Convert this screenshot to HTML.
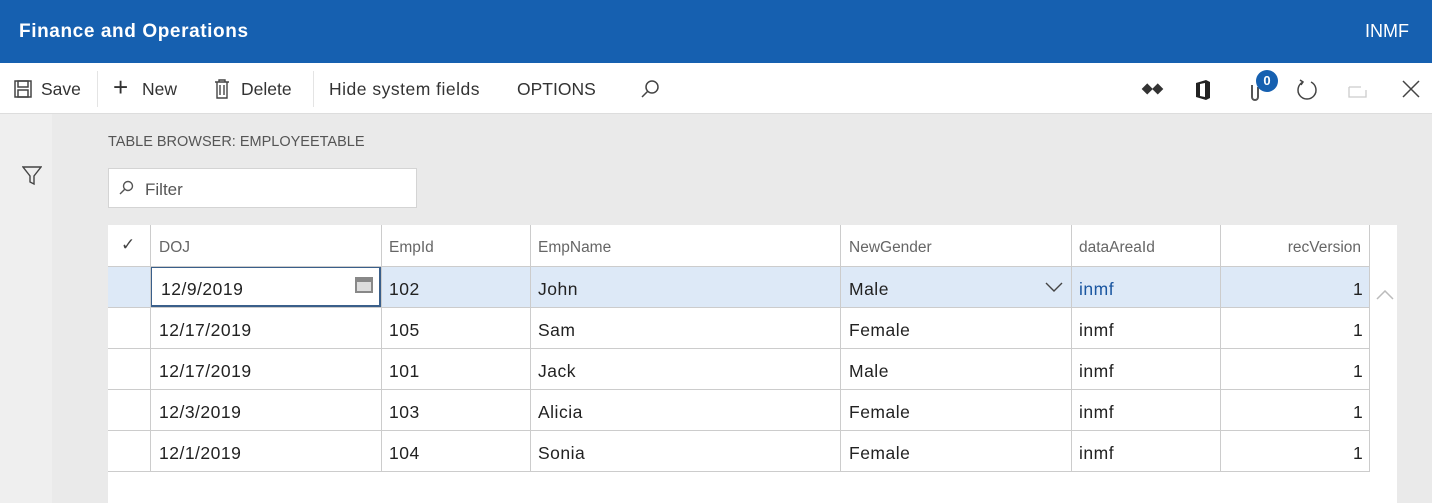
<!DOCTYPE html>
<html><head><style>
*{margin:0;padding:0;box-sizing:border-box}
body{width:1432px;height:503px;overflow:hidden;background:#eaeaea;font-family:"Liberation Sans",sans-serif;position:relative;color:#222}
.hdr{position:absolute;left:0;top:0;width:1432px;height:63px;background:#1660b0;color:#fff;font-weight:bold;font-size:19px}
.hdr span{position:absolute;top:21px}
.tb{position:absolute;left:0;top:63px;width:1432px;height:51px;background:#fff;border-bottom:1px solid #ddd;font-size:17.5px;color:#333}
.tb span{position:absolute;top:16px}
.sep{position:absolute;top:8px;width:1px;height:36px;background:#e4e4e4}
.left{position:absolute;left:0;top:114px;width:52px;height:389px;background:#efefef}
.grid{position:absolute;left:108px;top:225px;width:1289px;height:278px;background:#fff}
.c{position:absolute;font-size:17.5px;letter-spacing:0.5px}
.h{position:absolute;font-size:15.5px;color:#666;top:14px}
.vl{position:absolute;width:1px;background:#ccc;top:0;height:246px}
.hl{position:absolute;left:0;width:1262px;height:1px;background:#ccc}
</style></head><body>
<div class="hdr"><span style="left:19px;letter-spacing:0.6px">Finance and Operations</span><span style="left:1365px;font-weight:normal;font-size:18px">INMF</span></div>
<div class="tb">
<svg style="position:absolute;left:14px;top:17px" width="18" height="18" viewBox="0 0 18 18" fill="none" stroke="#444" stroke-width="1.5"><rect x="1" y="1" width="16" height="16"/><rect x="4" y="1" width="10" height="6"/><rect x="4" y="10" width="10" height="7"/></svg>
<span style="left:41px">Save</span><div class="sep" style="left:97px"></div>
<span style="left:113px;font-size:26px;top:9px;font-weight:300">+</span><span style="left:142px">New</span>
<svg style="position:absolute;left:214px;top:16px" width="16" height="20" viewBox="0 0 16 20" fill="none" stroke="#444" stroke-width="1.4"><path d="M1 3h14M5 3V1h6v2M3 3v16h10V3M6 6v10M10 6v10"/></svg>
<span style="left:241px">Delete</span><div class="sep" style="left:313px"></div>
<span style="left:329px;letter-spacing:0.5px">Hide system fields</span><span style="left:517px">OPTIONS</span>
<svg style="position:absolute;left:640px;top:16px" width="20" height="20" viewBox="0 0 20 20" fill="none" stroke="#444" stroke-width="1.5"><circle cx="12" cy="8" r="6"/><path d="M8 12L2 18"/></svg>
<span style="left:1142px;font-size:15px;font-weight:bold;top:17px">⬥⬥</span>
<svg style="position:absolute;left:1194px;top:16px" width="18" height="22" viewBox="0 0 18 22"><path d="M2 4l10-3 4 2v16l-4 2-10-3V4z" fill="#222"/><path d="M6 5l5-1v14l-5-1z" fill="#fff"/></svg>
<svg style="position:absolute;left:1250px;top:18px" width="10" height="22" viewBox="0 0 10 22" fill="none" stroke="#555" stroke-width="2"><path d="M2 4v12a3 3 0 006 0V6"/></svg>
<div style="position:absolute;left:1256px;top:7px;width:22px;height:22px;border-radius:50%;background:#1660b0;color:#fff;font-size:13px;text-align:center;line-height:22px;font-weight:bold">0</div>
<svg style="position:absolute;left:1296px;top:16px" width="22" height="22" viewBox="0 0 22 22" fill="none" stroke="#444" stroke-width="1.5"><path d="M7 3A9 9 0 1015 3"/><path d="M4 1l3 2-2 3"/></svg>
<svg style="position:absolute;left:1348px;top:21px" width="20" height="14" viewBox="0 0 20 14" fill="none" stroke="#ccc" stroke-width="1.3"><path d="M1 3h12M1 3v10h17V6"/></svg>
<svg style="position:absolute;left:1402px;top:17px" width="18" height="18" viewBox="0 0 18 18" stroke="#444" stroke-width="1.5"><path d="M1 1l16 16M17 1L1 17"/></svg>
</div>
<div class="left"></div>
<svg style="position:absolute;left:22px;top:166px" width="20" height="20" viewBox="0 0 20 20" fill="none" stroke="#444" stroke-width="1.4"><path d="M1 1h18l-7 9v8l-4-2v-6z"/></svg>
<div style="position:absolute;left:108px;top:134px;font-size:14.5px;color:#555">TABLE BROWSER: EMPLOYEETABLE</div>
<div style="position:absolute;left:108px;top:168px;width:309px;height:40px;background:#fff;border:1px solid #d4d4d4"></div>
<svg style="position:absolute;left:118px;top:180px" width="16" height="16" viewBox="0 0 16 16" fill="none" stroke="#555" stroke-width="1.4"><circle cx="10" cy="6" r="4.5"/><path d="M7 9l-5 5"/></svg>
<div style="position:absolute;left:145px;top:180px;font-size:17px;color:#555">Filter</div>
<div class="grid">
<div style="position:absolute;left:0;top:41px;width:1262px;height:41px;background:#dde9f7"></div>
<div style="position:absolute;left:42px;top:41px;width:231px;height:41px;border:2px solid #3a5f8a;background:#fff"></div>
<div class="vl" style="left:42px"></div><div class="vl" style="left:273px"></div><div class="vl" style="left:422px"></div><div class="vl" style="left:732px"></div><div class="vl" style="left:963px"></div><div class="vl" style="left:1112px"></div><div class="vl" style="left:1261px"></div>
<div class="hl" style="top:41px"></div><div class="hl" style="top:82px"></div><div class="hl" style="top:123px"></div><div class="hl" style="top:164px"></div><div class="hl" style="top:205px"></div><div class="hl" style="top:246px"></div>
<div class="h" style="left:13px;color:#444;font-size:17px;top:10px">✓</div>
<div class="h" style="left:51px">DOJ</div><div class="h" style="left:281px">EmpId</div><div class="h" style="left:430px">EmpName</div><div class="h" style="left:741px">NewGender</div><div class="h" style="left:971px">dataAreaId</div><div class="h" style="right:36px">recVersion</div>
<svg style="position:absolute;left:247px;top:52px" width="18" height="16" viewBox="0 0 18 16"><rect x="0" y="0" width="18" height="16" fill="#888"/><rect x="2" y="5" width="14" height="9" fill="#ddd"/></svg>
<svg style="position:absolute;left:937px;top:57px" width="18" height="10" viewBox="0 0 18 10" fill="none" stroke="#444" stroke-width="1.4"><path d="M1 1l8 8 8-8"/></svg>
<svg style="position:absolute;left:1268px;top:65px" width="18" height="10" viewBox="0 0 18 10" fill="none" stroke="#bbb" stroke-width="1.5"><path d="M1 9l8-8 8 8"/></svg>
<div class="c" style="left:53px;top:54px">12/9/2019</div><div class="c" style="left:281px;top:54px">102</div><div class="c" style="left:430px;top:54px">John</div><div class="c" style="left:741px;top:54px">Male</div><div class="c" style="left:971px;top:54px;color:#1a56a0">inmf</div><div class="c" style="left:1245px;top:54px">1</div>
<div class="c" style="left:51px;top:95px">12/17/2019</div><div class="c" style="left:281px;top:95px">105</div><div class="c" style="left:430px;top:95px">Sam</div><div class="c" style="left:741px;top:95px">Female</div><div class="c" style="left:971px;top:95px">inmf</div><div class="c" style="left:1245px;top:95px">1</div>
<div class="c" style="left:51px;top:136px">12/17/2019</div><div class="c" style="left:281px;top:136px">101</div><div class="c" style="left:430px;top:136px">Jack</div><div class="c" style="left:741px;top:136px">Male</div><div class="c" style="left:971px;top:136px">inmf</div><div class="c" style="left:1245px;top:136px">1</div>
<div class="c" style="left:51px;top:177px">12/3/2019</div><div class="c" style="left:281px;top:177px">103</div><div class="c" style="left:430px;top:177px">Alicia</div><div class="c" style="left:741px;top:177px">Female</div><div class="c" style="left:971px;top:177px">inmf</div><div class="c" style="left:1245px;top:177px">1</div>
<div class="c" style="left:51px;top:218px">12/1/2019</div><div class="c" style="left:281px;top:218px">104</div><div class="c" style="left:430px;top:218px">Sonia</div><div class="c" style="left:741px;top:218px">Female</div><div class="c" style="left:971px;top:218px">inmf</div><div class="c" style="left:1245px;top:218px">1</div>
</div>
</body></html>
